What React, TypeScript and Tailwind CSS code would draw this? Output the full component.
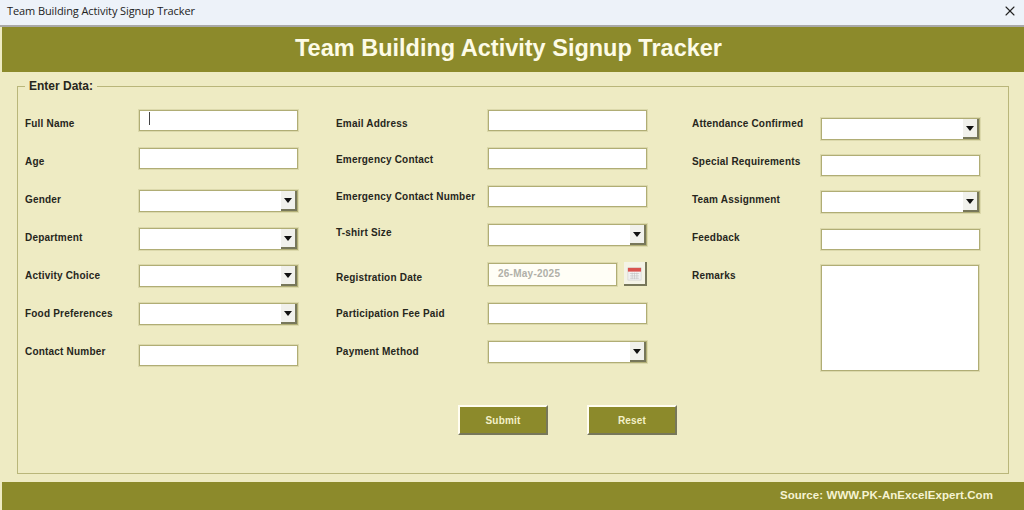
import { X } from 'lucide-react';

type Kind = 'text' | 'select' | 'date' | 'remarks';

type Row = {
  label: string;
  labelTop: string;
  fieldTop: string;
  kind?: Kind;
};

const col1: Row[] = [
  { label: 'Full Name', labelTop: 'mt-[12px]', fieldTop: 'mt-[6px]' },
  { label: 'Age', labelTop: 'mt-[12px]', fieldTop: 'mt-[6px]' },
  { label: 'Gender', labelTop: 'mt-[12px]', fieldTop: 'mt-[10px]', kind: 'select' },
  { label: 'Department', labelTop: 'mt-[12px]', fieldTop: 'mt-[10px]', kind: 'select' },
  { label: 'Activity Choice', labelTop: 'mt-[12px]', fieldTop: 'mt-[9px]', kind: 'select' },
  { label: 'Food Preferences', labelTop: 'mt-[12px]', fieldTop: 'mt-[9px]', kind: 'select' },
  { label: 'Contact Number', labelTop: 'mt-[12px]', fieldTop: 'mt-[13px]' },
];

const col2: Row[] = [
  { label: 'Email Address', labelTop: 'mt-[12px]', fieldTop: 'mt-[6px]' },
  { label: 'Emergency Contact', labelTop: 'mt-[10px]', fieldTop: 'mt-[6px]' },
  { label: 'Emergency Contact Number', labelTop: 'mt-[9px]', fieldTop: 'mt-[6px]' },
  { label: 'T-shirt Size', labelTop: 'mt-[7px]', fieldTop: 'mt-[6px]', kind: 'select' },
  { label: 'Registration Date', labelTop: 'mt-[14px]', fieldTop: 'mt-[7px]', kind: 'date' },
  { label: 'Participation Fee Paid', labelTop: 'mt-[12px]', fieldTop: 'mt-[9px]' },
  { label: 'Payment Method', labelTop: 'mt-[12px]', fieldTop: 'mt-[9px]', kind: 'select' },
];

const col3: Row[] = [
  { label: 'Attendance Confirmed', labelTop: 'mt-[12px]', fieldTop: 'mt-[14px]', kind: 'select' },
  { label: 'Special Requirements', labelTop: 'mt-[12px]', fieldTop: 'mt-[13px]' },
  { label: 'Team Assignment', labelTop: 'mt-[12px]', fieldTop: 'mt-[11px]', kind: 'select' },
  { label: 'Feedback', labelTop: 'mt-[12px]', fieldTop: 'mt-[11px]' },
  { label: 'Remarks', labelTop: 'mt-[12px]', fieldTop: 'mt-[9px]', kind: 'remarks' },
];

function CalendarIcon() {
  return (
    <svg viewBox="0 0 16 16" className="w-[15px] h-[15px]">
      <rect x="1" y="2" width="14" height="13" fill="#f3f3f3" stroke="#c9c9c9" strokeWidth="0.6" />
      <rect x="1" y="2" width="14" height="4" fill="#d9534f" />
      <path d="M3 8h10M3 10.5h10M3 13h10M5.5 7v7M8 7v7M10.5 7v7" stroke="#c4c4c4" strokeWidth="0.7" fill="none" />
    </svg>
  );
}

function Field({ kind = 'text', first }: { kind?: Kind; first?: boolean }) {
  if (kind === 'date') {
    return (
      <div className="flex w-[159px] justify-between">
        <div className="w-[129px] h-[23px] bg-[#fffef6] border border-[#b0ad75] shadow-[0_0_0_1px_#dcd9ac] pl-[9px] text-[10px] leading-[19px] font-bold tracking-[0.25px] text-[#b0b0a8]">
          26-May-2025
        </div>
        <div className="w-[23px] h-[24px] -mt-[1px] bg-[#f4f3e6] border-r-2 border-b-2 border-[#77775a] flex items-center justify-center">
          <CalendarIcon />
        </div>
      </div>
    );
  }
  if (kind === 'remarks') {
    return <div className="w-[158px] h-[106px] bg-white border border-[#b0ad75] shadow-[0_0_0_1px_#dcd9ac]" />;
  }
  if (kind === 'select') {
    return (
      <div className="w-[159px] h-[22px] bg-white border border-[#b0ad75] shadow-[0_0_0_1px_#dcd9ac] flex justify-end">
        <div className="w-[16px] h-full bg-[#f1f1ec] border-r-2 border-b-2 border-[#77775a] flex items-center justify-center">
          <svg viewBox="0 0 8 5" className="w-[8px] h-[5px]">
            <path d="M0 0h8L4 5z" fill="#111" />
          </svg>
        </div>
      </div>
    );
  }
  return (
    <div className="w-[159px] h-[21px] bg-white border border-[#b0ad75] shadow-[0_0_0_1px_#dcd9ac] pl-[9px] pt-[1px]">
      {first && <div className="w-px h-[13px] bg-[#444]" />}
    </div>
  );
}

function Column({ rows, labelWidth }: { rows: Row[]; labelWidth: string }) {
  return (
    <div className="flex flex-col">
      {rows.map((row, i) => (
        <div key={row.label} className="flex h-[38px] overflow-visible">
          <div className={`${labelWidth} ${row.labelTop} shrink-0 h-[16px] text-[10px] leading-[16px] font-bold tracking-[0.2px] text-[#26261c] whitespace-nowrap`}>
            {row.label}
          </div>
          <div className={row.fieldTop}>
            <Field kind={row.kind} first={row.label === 'Full Name' && i === 0} />
          </div>
        </div>
      ))}
    </div>
  );
}

function ActionButton({ text }: { text: string }) {
  return (
    <button className="w-[90px] h-[30px] pt-[1px] bg-[#8c8a2b] border-l-2 border-t-2 border-l-[#fffdf0] border-t-[#fffdf0] border-r-2 border-b-2 border-r-[#77775a] border-b-[#77775a] text-[10px] font-bold tracking-[0.2px] text-[#f3f0c8]">
      {text}
    </button>
  );
}

export default function App() {
  return (
    <div className="w-[1024px] h-[510px] flex flex-col overflow-hidden bg-[#eeebc3] font-['Liberation_Sans',Arial,sans-serif]">
      <div className="h-[27px] shrink-0 bg-[#edf2f9] border-b-2 border-[#a9a9a9] flex items-center justify-between pl-[7px] pr-[6px] pb-[3px] font-['Open_Sans',sans-serif] text-[11px] tracking-[-0.1px] text-[#222]">
        <span>Team Building Activity Signup Tracker</span>
        <X className="w-[16px] h-[16px] text-[#222]" strokeWidth={1.6} />
      </div>

      <div className="flex-1 flex flex-col pl-[2px] min-h-0">
        <div className="h-[45px] shrink-0 pb-[2px] pr-[9px] bg-[#8c8a2b] flex items-center justify-center text-[23.5px] font-bold text-[#fdfbe6]">
          Team Building Activity Signup Tracker
        </div>

        <div className="flex-1 min-h-0 flex flex-col pt-[6px] pb-[8px] pl-[15px] pr-[15px]">
          <fieldset className="flex-1 min-h-0 border border-[#b9b67a] pl-[7px] pt-[10px]">
            <legend className="px-[4px] h-[16px] text-[12px] leading-[16px] font-bold text-[#26261c]">
              Enter Data:
            </legend>
            <div className="grid grid-cols-[311px_356px_1fr]">
              <Column rows={col1} labelWidth="w-[114px]" />
              <Column rows={col2} labelWidth="w-[152px]" />
              <Column rows={col3} labelWidth="w-[129px]" />
            </div>
            <div className="flex gap-[39px] pl-[433px] mt-[35px]">
              <ActionButton text="Submit" />
              <ActionButton text="Reset" />
            </div>
          </fieldset>
        </div>

        <div className="h-[28px] shrink-0 bg-[#8c8a2b] flex items-center justify-end pr-[31px] text-[11.5px] font-bold tracking-[0.07px] text-[#f6f3d2]">
          Source: WWW.PK-AnExcelExpert.Com
        </div>
      </div>
    </div>
  );
}
